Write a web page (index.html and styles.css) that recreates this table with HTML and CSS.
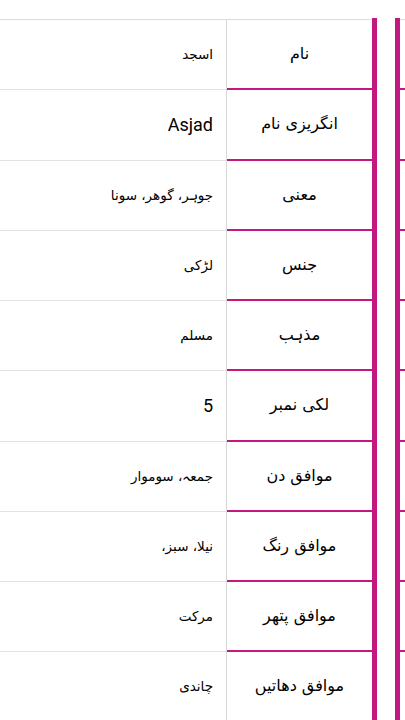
FILE: index.html
```html
<!DOCTYPE html>
<html lang="ur">
<head>
<meta charset="utf-8">
<link rel="stylesheet" href="styles.css">
</head>
<body>
<div class="page">
  <div class="table">
    <div class="row"><div class="val ur">اسجد</div><div class="key">نام</div></div>
    <div class="row"><div class="val en">Asjad</div><div class="key">انگریزی نام</div></div>
    <div class="row"><div class="val ur">جوہر، گوھر، سونا</div><div class="key">معنی</div></div>
    <div class="row"><div class="val ur">لڑکی</div><div class="key">جنس</div></div>
    <div class="row"><div class="val ur">مسلم</div><div class="key">مذہب</div></div>
    <div class="row"><div class="val en">5</div><div class="key">لکی نمبر</div></div>
    <div class="row"><div class="val ur">جمعہ، سوموار</div><div class="key">موافق دن</div></div>
    <div class="row"><div class="val ur">نیلا، سبز،</div><div class="key">موافق رنگ</div></div>
    <div class="row"><div class="val ur">مرکت</div><div class="key">موافق پتھر</div></div>
    <div class="row"><div class="val ur">چاندی</div><div class="key">موافق دھاتیں</div></div>
  </div>
  <div class="bar"></div>
  <div class="gap"></div>
  <div class="bar"></div>
  <div class="table2">
    <div class="cell2"></div><div class="cell2"></div><div class="cell2"></div><div class="cell2"></div><div class="cell2"></div>
    <div class="cell2"></div><div class="cell2"></div><div class="cell2"></div><div class="cell2"></div><div class="cell2"></div>
  </div>
</div>
</body>
</html>
```

FILE: styles.css
```css
html, body {
  margin: 0;
  padding: 0;
  background: #ffffff;
}
.page {
  display: flex;
  align-items: stretch;
  padding-top: 18px;
  width: 405px;
  height: 720px;
  box-sizing: border-box;
  overflow: hidden;
}
.table {
  width: 372px;
  flex: none;
  margin-top: 1px;
  border-top: 1px solid #dcdcdc;
}
.row {
  display: grid;
  grid-template-columns: 227px 145px;
  height: 70.25px;
}
.val {
  box-sizing: border-box;
  padding-right: 13px;
  border-right: 1px solid #d9d9d9;
  border-bottom: 1px solid #e2e2e2;
  color: #000;
  text-align: right;
  line-height: 69px;
  white-space: nowrap;
}
.val.ur {
  font-family: "DejaVu Sans", sans-serif;
  font-size: 13.5px;
  direction: rtl;
  text-align: right;
}
.val.en {
  font-family: Roboto, "Liberation Sans", sans-serif;
  font-size: 18px;
}
.key {
  box-sizing: border-box;
  text-align: center;
  line-height: 68px;
  direction: rtl;
  white-space: nowrap;
  font-family: "DejaVu Sans", sans-serif;
  font-size: 16px;
  color: #000;
  border-bottom: 2px solid #c2187f;
}
.bar {
  width: 5px;
  flex: none;
  background: #c2187f;
}
.gap {
  width: 18px;
  flex: none;
}
.table2 {
  flex: 1;
  margin-top: 1px;
  border-top: 1px solid #dcdcdc;
}
.cell2 {
  height: 70.25px;
  box-sizing: border-box;
  border-bottom: 2px solid #c2187f;
}
```
